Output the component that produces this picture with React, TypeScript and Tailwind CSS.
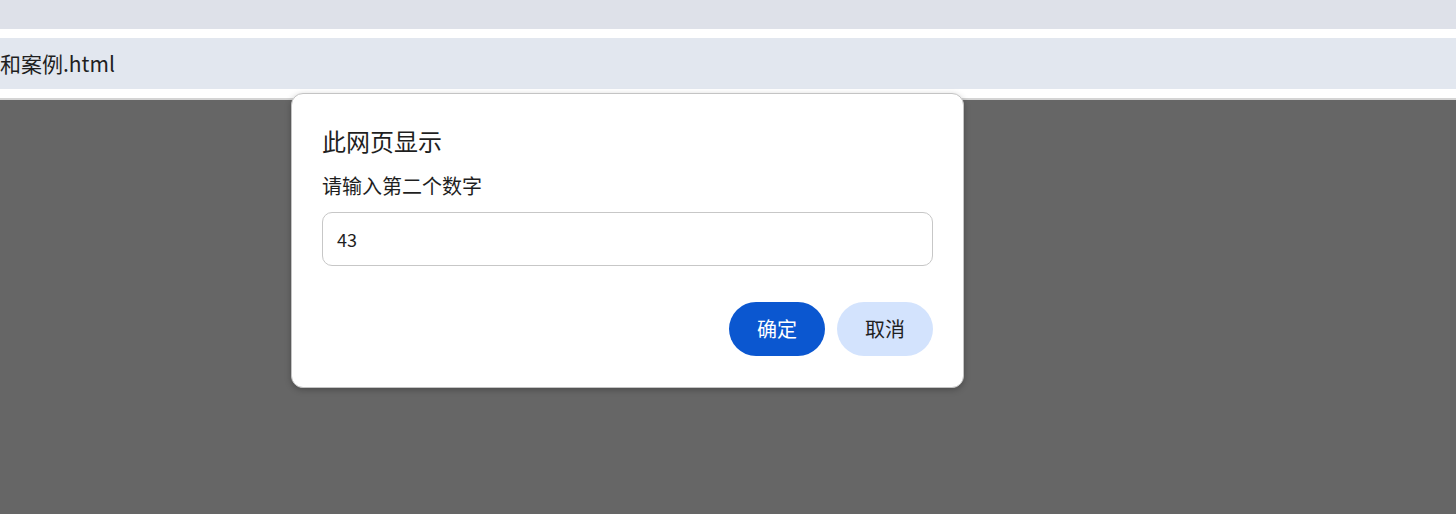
import React from "react";

export default function App() {
  const font = { fontFamily: '"Microsoft YaHei", "Noto Sans CJK SC", "Noto Sans", sans-serif' };
  return (
    <div className="relative w-[1456px] h-[514px] overflow-hidden bg-[#666666]" style={font}>
      <div className="flex flex-col bg-white">
        <div className="h-[29px] bg-[#dee1e9]" />
        <div className="h-[9px]" />
        <div className="h-[51px] bg-[#e2e7ef] flex items-center text-[21px] text-[#1f1f1f]">和案例.html</div>
        <div className="h-[9px]" />
        <div className="h-[2px] bg-[#d4d4d4]" />
      </div>
      <div className="absolute left-[291px] top-[93px] w-[673px] h-[295px] rounded-[12px] border border-[#c4c4c4] bg-white shadow-[0_2px_6px_rgba(0,0,0,0.25)] flex flex-col px-[30px] pt-[32px]">
        <div className="text-[24px] leading-[30px] text-[#1f1f1f]">此网页显示</div>
        <div className="mt-[18px] text-[20px] leading-[24px] text-[#1f1f1f]">请输入第二个数字</div>
        <div className="mt-[14px] h-[54px] rounded-[10px] border-[1.5px] border-[#c7c7c7] flex items-center px-[14px] text-[18px] text-[#1f1f1f]">43</div>
        <div className="mt-[36px] flex justify-end gap-[12px]">
          <button className="w-[96px] h-[54px] rounded-full bg-[#0b57d0] text-white text-[20px]">确定</button>
          <button className="w-[96px] h-[54px] rounded-full bg-[#d3e3fd] text-[#1f1f1f] text-[20px]">取消</button>
        </div>
      </div>
    </div>
  );
}
